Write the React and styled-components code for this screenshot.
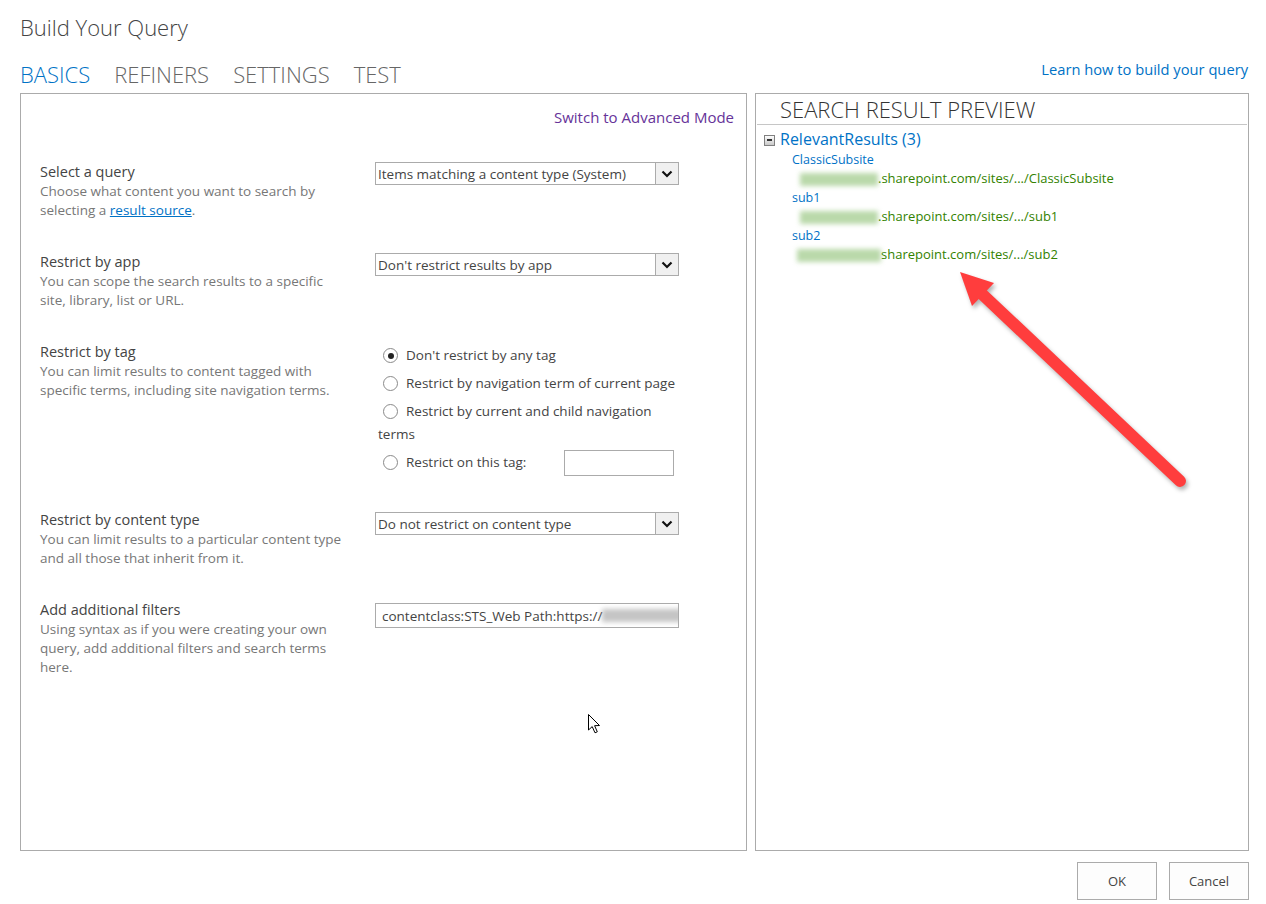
import React from "react";
import styled, { createGlobalStyle } from "styled-components";

const GlobalStyle = createGlobalStyle`
  html, body { margin: 0; padding: 0; background: #fff; }
  body { font-family: "Open Sans", "Noto Sans", sans-serif; color: #444; }
  * { box-sizing: border-box; }
`;

const Page = styled.div`
  position: relative;
  width: 1266px;
  height: 904px;
  padding: 11px 17px 0 20px;
  overflow: hidden;
`;

const Title = styled.h1`
  margin: 0;
  font-size: 22px;
  font-weight: 300;
  line-height: 32px;
  color: #444;
`;

const TopBar = styled.div`
  display: flex;
  justify-content: space-between;
  align-items: flex-end;
  margin-top: 9px;
  height: 41px;
`;

const Tabs = styled.div`
  display: flex;
  gap: 24px;
  padding-bottom: 4px;
`;

const Tab = styled.span`
  font-size: 22px;
  font-weight: 300;
  line-height: 30px;
  color: ${(p) => (p.$active ? "#0072c6" : "#666")};
`;

const LearnLink = styled.a`
  font-size: 14.7px;
  line-height: 20px;
  color: #0072c6;
  text-decoration: none;
  padding-bottom: 14px;
  margin-right: 1px;
`;

const Main = styled.div`
  display: flex;
  gap: 8px;
  height: 758px;
`;

const LeftPanel = styled.div`
  width: 727px;
  border: 1px solid #ababab;
  padding: 13px 12px 0 19px;
`;

const SwitchRow = styled.div`
  text-align: right;
  font-size: 15px;
  line-height: 20px;
`;

const SwitchLink = styled.a`
  color: #663399;
  text-decoration: none;
`;

const Rows = styled.div`
  margin-top: 35px;
  display: flex;
  flex-direction: column;
  gap: 32px;
`;

const Row = styled.div`
  display: grid;
  grid-template-columns: 335px 304px;
`;

const Label = styled.div`
  font-size: 14.5px;
  line-height: 20px;
  color: #444;
`;

const Desc = styled.div`
  font-size: 13.5px;
  line-height: 19px;
  color: #777;
  white-space: nowrap;
`;

const DescLink = styled.a`
  color: #0072c6;
  text-decoration: underline;
`;

const SelectBox = styled.div`
  display: flex;
  align-items: center;
  height: 23px;
  border: 1px solid #ababab;
  background: #fff;
  padding-left: 2px;
  font-size: 13.5px;
  color: #444;
  margin-top: ${(p) => p.$mt || "0px"};
`;

const SelectText = styled.span`
  flex: 1;
  white-space: nowrap;
  overflow: hidden;
`;

const ArrowBox = styled.span`
  width: 23px;
  height: 21px;
  border-left: 1px solid #ababab;
  background: #f0f0f0;
  display: flex;
  align-items: center;
  justify-content: center;
`;

const TextInput = styled.div`
  display: flex;
  align-items: center;
  flex-shrink: 0;
  height: ${(p) => p.$h || "25px"};
  width: ${(p) => p.$w || "auto"};
  border: 1px solid #ababab;
  background: #fff;
  padding-left: 6px;
  font-size: 13.5px;
  color: #444;
  white-space: nowrap;
  overflow: hidden;
  margin-top: ${(p) => p.$mt || "0px"};
`;

const Blur = styled.span`
  display: inline-block;
  flex-shrink: 0;
  width: ${(p) => p.$w}px;
  height: ${(p) => p.$h || 13}px;
  margin-left: ${(p) => p.$ml || 0}px;
  background: ${(p) => p.$c};
  filter: blur(2.5px);
  vertical-align: middle;
`;

const RadioGroup = styled.div`
  padding: 2px 0 0 3px;
  font-size: 13.5px;
  color: #444;
`;

const RadioItem = styled.div`
  display: flex;
  align-items: center;
  height: 23px;
  line-height: 23px;
  margin-bottom: 5px;
  white-space: nowrap;
  &:last-child {
    margin-bottom: 4px;
  }
`;

const RadioWrap = styled.div`
  line-height: 23px;
  margin-bottom: 5px;
  white-space: nowrap;
`;

const Radio = styled.span`
  display: inline-block;
  flex-shrink: 0;
  width: 15px;
  height: 15px;
  border-radius: 50%;
  border: 1px solid #8a8a8a;
  background: #fff;
  margin: 0 8px 0 5px;
  vertical-align: -3px;
  position: relative;
  &::after {
    content: "";
    display: ${(p) => (p.$checked ? "block" : "none")};
    position: absolute;
    left: 3.5px;
    top: 3.5px;
    width: 6px;
    height: 6px;
    border-radius: 50%;
    background: #222;
  }
`;

const TagLabel = styled.span`
  width: 158px;
`;

const RightPanel = styled.div`
  flex: 1;
  border: 1px solid #ababab;
  padding: 0 1px;
`;

const PreviewHeader = styled.div`
  height: 31px;
  border-bottom: 1px solid #c6c6c6;
  padding-left: 23px;
  font-size: 22px;
  font-weight: 300;
  line-height: 31px;
  color: #333;
`;

const PreviewBody = styled.div`
  padding: 2px 0 0 7px;
`;

const GroupRow = styled.div`
  display: flex;
  align-items: center;
  gap: 5px;
  font-size: 16px;
  line-height: 24px;
  color: #0072c6;
`;

const Expander = styled.span`
  width: 11px;
  height: 11px;
  border: 1px solid #808080;
  background: linear-gradient(#fdfdfd, #c9c9c9);
  display: flex;
  align-items: center;
  justify-content: center;
  margin-top: 2px;
  &::after {
    content: "";
    width: 5px;
    height: 2px;
    background: #333;
  }
`;

const ResultList = styled.div`
  padding-left: 28px;
  font-size: 12.5px;
  line-height: 19px;
  margin-top: -1px;
`;

const ResultTitle = styled.div`
  color: #0072c6;
`;

const ResultUrl = styled.div`
  color: #338200;
  font-size: 13px;
  padding-left: ${(p) => p.$pl || 8}px;
  white-space: nowrap;
`;

const Footer = styled.div`
  display: flex;
  justify-content: flex-end;
  gap: 12px;
  margin-top: 11px;
`;

const Button = styled.button`
  width: 80px;
  height: 38px;
  border: 1px solid #ababab;
  background: #fdfdfd;
  font-family: inherit;
  font-size: 13px;
  color: #444;
  padding: 0;
`;

const Annotation = styled.svg`
  position: absolute;
  left: 940px;
  top: 260px;
  width: 260px;
  height: 240px;
  overflow: visible;
  filter: drop-shadow(2px 3px 2px rgba(0, 0, 0, 0.3));
`;

const Cursor = styled.svg`
  position: absolute;
  left: 588px;
  top: 714px;
  width: 13px;
  height: 20px;
`;

const Chevron = () => (
  <svg width="12" height="8" viewBox="0 0 12 8">
    <path d="M1.5 1.5 L6 6 L10.5 1.5" fill="none" stroke="#111" strokeWidth="2.2" />
  </svg>
);

const Select = ({ children, mt }) => (
  <SelectBox $mt={mt}>
    <SelectText>{children}</SelectText>
    <ArrowBox>
      <Chevron />
    </ArrowBox>
  </SelectBox>
);

export default function App() {
  return (
    <>
      <GlobalStyle />
      <Page>
        <Title>Build Your Query</Title>
        <TopBar>
          <Tabs>
            <Tab $active>BASICS</Tab>
            <Tab>REFINERS</Tab>
            <Tab>SETTINGS</Tab>
            <Tab>TEST</Tab>
          </Tabs>
          <LearnLink href="#">Learn how to build your query</LearnLink>
        </TopBar>
        <Main>
          <LeftPanel>
            <SwitchRow>
              <SwitchLink href="#">Switch to Advanced Mode</SwitchLink>
            </SwitchRow>
            <Rows>
              <Row>
                <div>
                  <Label>Select a query</Label>
                  <Desc>
                    Choose what content you want to search by
                    <br />
                    selecting a <DescLink href="#">result source</DescLink>.
                  </Desc>
                </div>
                <Select>Items matching a content type (System)</Select>
              </Row>
              <Row>
                <div>
                  <Label>Restrict by app</Label>
                  <Desc>
                    You can scope the search results to a specific
                    <br />
                    site, library, list or URL.
                  </Desc>
                </div>
                <Select mt="1px">Don't restrict results by app</Select>
              </Row>
              <Row>
                <div>
                  <Label>Restrict by tag</Label>
                  <Desc>
                    You can limit results to content tagged with
                    <br />
                    specific terms, including site navigation terms.
                  </Desc>
                </div>
                <RadioGroup>
                  <RadioItem>
                    <Radio $checked />
                    Don't restrict by any tag
                  </RadioItem>
                  <RadioItem>
                    <Radio />
                    Restrict by navigation term of current page
                  </RadioItem>
                  <RadioWrap>
                    <Radio />
                    Restrict by current and child navigation
                    <br />
                    terms
                  </RadioWrap>
                  <RadioItem>
                    <Radio />
                    <TagLabel>Restrict on this tag:</TagLabel>
                    <TextInput $w="110px" $h="26px" />
                  </RadioItem>
                </RadioGroup>
              </Row>
              <Row>
                <div>
                  <Label>Restrict by content type</Label>
                  <Desc>
                    You can limit results to a particular content type
                    <br />
                    and all those that inherit from it.
                  </Desc>
                </div>
                <Select mt="2px">Do not restrict on content type</Select>
              </Row>
              <Row>
                <div>
                  <Label>Add additional filters</Label>
                  <Desc>
                    Using syntax as if you were creating your own
                    <br />
                    query, add additional filters and search terms
                    <br />
                    here.
                  </Desc>
                </div>
                <TextInput $mt="3px">
                  contentclass:STS_Web Path:https://
                  <Blur $w={80} $c="rgba(150,150,150,0.55)" />
                </TextInput>
              </Row>
            </Rows>
          </LeftPanel>
          <RightPanel>
            <PreviewHeader>SEARCH RESULT PREVIEW</PreviewHeader>
            <PreviewBody>
              <GroupRow>
                <Expander />
                RelevantResults (3)
              </GroupRow>
              <ResultList>
                <ResultTitle>ClassicSubsite</ResultTitle>
                <ResultUrl>
                  <Blur $w={78} $c="rgba(130,185,100,0.55)" />
                  .sharepoint.com/sites/.../ClassicSubsite
                </ResultUrl>
                <ResultTitle>sub1</ResultTitle>
                <ResultUrl>
                  <Blur $w={78} $c="rgba(130,185,100,0.55)" />
                  .sharepoint.com/sites/.../sub1
                </ResultUrl>
                <ResultTitle>sub2</ResultTitle>
                <ResultUrl $pl={5}>
                  <Blur $w={84} $c="rgba(130,185,100,0.55)" />
                  sharepoint.com/sites/.../sub2
                </ResultUrl>
              </ResultList>
            </PreviewBody>
          </RightPanel>
        </Main>
        <Footer>
          <Button>OK</Button>
          <Button>Cancel</Button>
        </Footer>
        <Annotation viewBox="940 260 260 240">
          <line x1="982" y1="294" x2="1180" y2="481" stroke="#ff3d3d" strokeWidth="12" strokeLinecap="round" />
          <polygon points="960,272 994,283 972,306" fill="#ff3d3d" />
        </Annotation>
        <Cursor viewBox="0 0 13 20">
          <path d="M0.5 0.5 L0.5 16 L4.2 12.6 L7 18.8 L9.3 17.8 L6.6 11.7 L11.5 11.5 Z" fill="#fff" stroke="#000" strokeWidth="1" />
        </Cursor>
      </Page>
    </>
  );
}
